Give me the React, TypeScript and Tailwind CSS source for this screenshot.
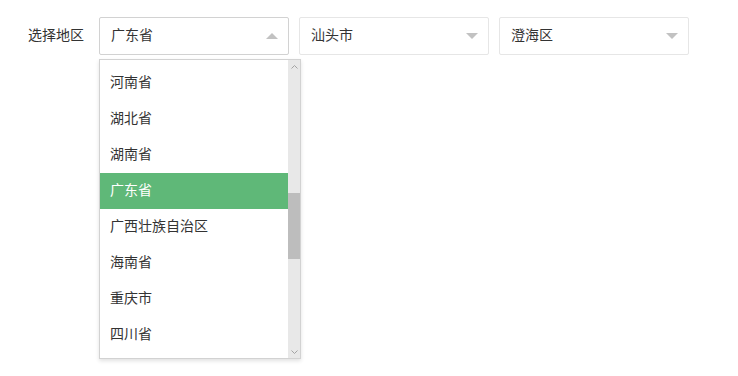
import React from "react";

const items = ["河南省", "湖北省", "湖南省", "广东省", "广西壮族自治区", "海南省", "重庆市", "四川省"];

function Tri({ up }: { up?: boolean }) {
  return (
    <svg width="12" height="6" viewBox="0 0 12 6" className="absolute right-[10px] top-[15px]">
      {up ? <path d="M0 6 L6 0 L12 6 Z" fill="#c2c2c2" /> : <path d="M0 0 L12 0 L6 6 Z" fill="#c2c2c2" />}
    </svg>
  );
}

function Select({ value, open }: { value: string; open?: boolean }) {
  return (
    <div
      className={`relative h-[38px] w-[190px] rounded-[2px] border bg-white pl-[11px] leading-[33px] text-[14px] text-[#333] ${
        open ? "border-[#d2d2d2]" : "border-[#e6e6e6]"
      }`}
    >
      {value}
      <Tri up={open} />
    </div>
  );
}

export default function App() {
  return (
    <div
      className="h-[376px] w-[738px] bg-white"
      style={{ fontFamily: '"Noto Sans CJK SC", "Noto Sans", sans-serif' }}
    >
      <div className="flex items-start pl-[28px] pt-[17px]">
        <label className="h-[38px] w-[71px] text-[14px] leading-[35px] text-[#333]">选择地区</label>
        <div className="flex gap-[10px]">
          <div className="relative">
            <Select value="广东省" open />
            <div className="absolute left-0 top-[42px] z-10 flex h-[300px] w-[202px] border border-[#d2d2d2] bg-white shadow-[0_2px_4px_rgba(0,0,0,0.12)]">
              <div className="flex-1 py-[5px]">
                {items.map((it) => (
                  <div
                    key={it}
                    className={`h-[36px] pl-[10px] text-[14px] leading-[32px] ${
                      it === "广东省" ? "bg-[#5fb878] text-white" : "text-[#333]"
                    }`}
                  >
                    {it}
                  </div>
                ))}
              </div>
              <div className="flex w-[12px] flex-col bg-[#e8e8e8]">
                <div className="flex h-[13px] items-center justify-center">
                  <svg width="7" height="4" viewBox="0 0 7 4">
                    <path d="M0.5 3.5 L3.5 0.5 L6.5 3.5" stroke="#a3a3a3" strokeWidth="1" fill="none" />
                  </svg>
                </div>
                <div className="h-[120px]" />
                <div className="h-[66px] bg-[#bdbdbd]" />
                <div className="flex-1" />
                <div className="flex h-[13px] items-center justify-center">
                  <svg width="7" height="4" viewBox="0 0 7 4">
                    <path d="M0.5 0.5 L3.5 3.5 L6.5 0.5" stroke="#a3a3a3" strokeWidth="1" fill="none" />
                  </svg>
                </div>
              </div>
            </div>
          </div>
          <Select value="汕头市" />
          <Select value="澄海区" />
        </div>
      </div>
    </div>
  );
}
